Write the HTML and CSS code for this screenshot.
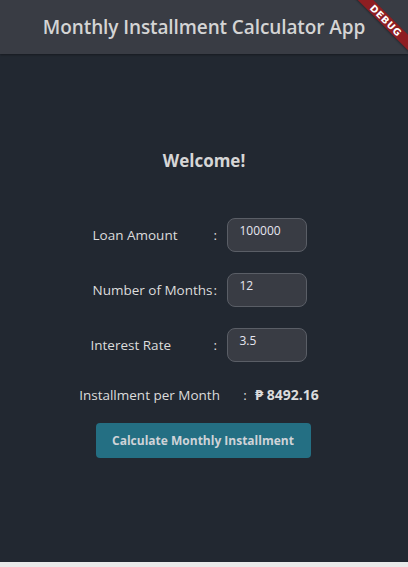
FILE: index.html
```html
<!DOCTYPE html>
<html>
<head>
<meta charset="utf-8">
<link rel="stylesheet" href="styles.css">
</head>
<body>
<div class="app">
  <header class="appbar">
    <h1 class="title">Monthly Installment Calculator App</h1>
    <div class="debug">DEBUG</div>
  </header>
  <main class="content">
    <h2 class="welcome">Welcome!</h2>
    <div class="form">
      <div class="row">
        <span class="label">Loan Amount</span>
        <span class="colon">:</span>
        <div class="input">100000</div>
      </div>
      <div class="row">
        <span class="label">Number of Months</span>
        <span class="colon">:</span>
        <div class="input">12</div>
      </div>
      <div class="row shift">
        <span class="label">Interest Rate</span>
        <span class="colon">:</span>
        <div class="input">3.5</div>
      </div>
    </div>
    <div class="result">
      <span class="rlabel">Installment per Month</span>
      <span class="rcolon">:</span>
      <span class="rvalue">₱ 8492.16</span>
    </div>
    <button class="btn">Calculate Monthly Installment</button>
  </main>
</div>
</body>
</html>
```
FILE: styles.css
```css
* { box-sizing: border-box; }
html, body { margin: 0; padding: 0; }
body {
  background: #e9e9e9;
  font-family: "Open Sans", "Noto Sans", sans-serif;
  width: 408px;
  height: 567px;
  overflow: hidden;
}
.app {
  width: 408px;
  height: 562px;
  background: #222831;
  display: flex;
  flex-direction: column;
  position: relative;
  overflow: hidden;
}
.appbar {
  height: 54px;
  background: #393c44;
  display: flex;
  align-items: center;
  justify-content: center;
  box-shadow: 0 1px 2px rgba(0,0,0,0.35);
}
.title {
  margin: 0;
  font-size: 19px;
  font-weight: 600;
  color: #d4d4d4;
  letter-spacing: -0.1px;
}
.debug {
  position: absolute;
  top: 15px;
  right: -28px;
  width: 100px;
  height: 11px;
  background: #8e1e22;
  color: #ffffff;
  font-family: "DejaVu Sans", sans-serif;
  font-size: 9.5px;
  font-weight: bold;
  text-align: center;
  line-height: 11px;
  transform: rotate(45deg);
  letter-spacing: 0.6px;
  box-shadow: 0 1px 2px rgba(0,0,0,0.3);
}
.content {
  display: flex;
  flex-direction: column;
  align-items: center;
}
.welcome {
  margin: 96px 0 0;
  font-size: 17px;
  font-weight: 700;
  color: #d6d6d6;
  line-height: 22px;
}
.form {
  margin-top: 46px;
  display: flex;
  flex-direction: column;
  gap: 21px;
  padding-right: 10px;
}
.row {
  display: flex;
  align-items: center;
  color: #dcdcdc;
  font-size: 13.5px;
}
.label {
  width: 122px;
  padding-left: 1px;
}
.row.shift { padding-left: 1px; }
.row.shift .label { padding-left: 0; margin-left: -2px; width: 123px; }
.colon {
  width: 13px;
}
.input {
  width: 80px;
  height: 34px;
  border: 1px solid #5a5e66;
  border-radius: 8px;
  background: #393c44;
  color: #e6e6f0;
  font-size: 12px;
  padding: 5px 0 0 12px;
  line-height: 14px;
}
.result {
  margin-top: 23px;
  display: flex;
  align-items: center;
  color: #dcdcdc;
  font-size: 13.5px;
  padding-right: 10px;
}
.rlabel { width: 164px; }
.rcolon { width: 12px; }
.rvalue { font-weight: 700; font-size: 14px; }
.btn {
  margin-top: 19px;
  width: 215px;
  height: 35px;
  border: none;
  border-radius: 4px;
  background: #246f83;
  color: #cfd3d8;
  font-family: "Open Sans", "Noto Sans", sans-serif;
  font-size: 12px;
  font-weight: 700;
  padding: 0;
  margin-left: -2px;
}
```
